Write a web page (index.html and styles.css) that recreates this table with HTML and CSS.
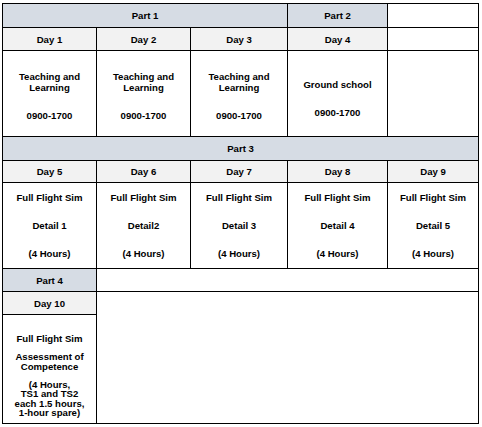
FILE: index.html
```html
<!DOCTYPE html>
<html>
<head>
<meta charset="utf-8">
<link rel="stylesheet" href="styles.css">
</head>
<body>
<table class="sched">
  <colgroup>
    <col class="c1"><col class="c2"><col class="c3"><col class="c4"><col class="c5">
  </colgroup>
  <tr class="r-part">
    <td class="part" colspan="3">Part 1</td>
    <td class="part">Part 2</td>
    <td class="blank"></td>
  </tr>
  <tr class="r-day">
    <td class="day">Day 1</td>
    <td class="day">Day 2</td>
    <td class="day">Day 3</td>
    <td class="day">Day 4</td>
    <td class="blank"></td>
  </tr>
  <tr class="r-body1">
    <td class="body teach"><p>Teaching and<br>Learning</p><p class="time">0900-1700</p></td>
    <td class="body teach"><p>Teaching and<br>Learning</p><p class="time">0900-1700</p></td>
    <td class="body teach"><p>Teaching and<br>Learning</p><p class="time">0900-1700</p></td>
    <td class="body ground"><p>Ground school</p><p class="time">0900-1700</p></td>
    <td class="blank"></td>
  </tr>
  <tr class="r-part3">
    <td class="part" colspan="5">Part 3</td>
  </tr>
  <tr class="r-day2">
    <td class="day">Day 5</td>
    <td class="day">Day 6</td>
    <td class="day">Day 7</td>
    <td class="day">Day 8</td>
    <td class="day">Day 9</td>
  </tr>
  <tr class="r-body2">
    <td class="body sim"><p>Full Flight Sim</p><p>Detail 1</p><p>(4 Hours)</p></td>
    <td class="body sim"><p>Full Flight Sim</p><p>Detail2</p><p>(4 Hours)</p></td>
    <td class="body sim"><p>Full Flight Sim</p><p>Detail 3</p><p>(4 Hours)</p></td>
    <td class="body sim"><p>Full Flight Sim</p><p>Detail 4</p><p>(4 Hours)</p></td>
    <td class="body sim"><p>Full Flight Sim</p><p>Detail 5</p><p>(4 Hours)</p></td>
  </tr>
  <tr class="r-part4">
    <td class="part">Part 4</td>
    <td class="blank" colspan="4"></td>
  </tr>
  <tr class="r-day3">
    <td class="day">Day 10</td>
    <td class="blank" colspan="4" rowspan="2"></td>
  </tr>
  <tr class="r-body3">
    <td class="body assess"><p>Full Flight Sim</p><p class="mid">Assessment of<br>Competence</p><p class="last">(4 Hours,<br>TS1 and TS2<br>each 1.5 hours,<br>1-hour spare)</p></td>
  </tr>
</table>
</body>
</html>
```

FILE: styles.css
```css
html, body {
  margin: 0;
  padding: 0;
  background: #ffffff;
}

body {
  padding: 3px 0 0 2px;
  font-family: "Liberation Sans", Arial, sans-serif;
  font-size: 9.6px;
  font-weight: bold;
  color: #000000;
}

.sched {
  border-collapse: collapse;
  table-layout: fixed;
  width: 476px;
}

.sched td {
  border: 1px solid #000000;
  padding: 0;
  text-align: center;
  vertical-align: middle;
  line-height: 11px;
}

.c1 { width: 94px; }
.c2 { width: 94px; }
.c3 { width: 97px; }
.c4 { width: 100px; }
.c5 { width: 91px; }

.r-part { height: 24px; }
.r-day { height: 23px; }
.r-body1 { height: 86px; }
.r-part3 { height: 24px; }
.r-day2 { height: 22px; }
.r-body2 { height: 86px; }
.r-part4 { height: 23px; }
.r-day3 { height: 23px; }
.r-body3 { height: 109px; }

.part { background: #d6dce4; }
.day { background: #f2f2f2; }
.blank { background: #ffffff; }

.sched td.body {
  vertical-align: top;
}

.body p {
  margin: 0;
}

.sched td.teach { padding-top: 20px; }
.teach .time { margin-top: 16.5px; }

.sched td.ground { padding-top: 28px; }
.ground .time { margin-top: 17px; }

.sched td.sim { padding-top: 9px; }
.sim p + p { margin-top: 17px; }

.sched td.assess {
  padding-top: 19px;
  line-height: 9.5px;
}
.assess p { line-height: 9.5px; }
.assess p.mid { line-height: 10px; margin-top: 8px; }
.assess p.last { line-height: 9.5px; margin-top: 8px; }
```
